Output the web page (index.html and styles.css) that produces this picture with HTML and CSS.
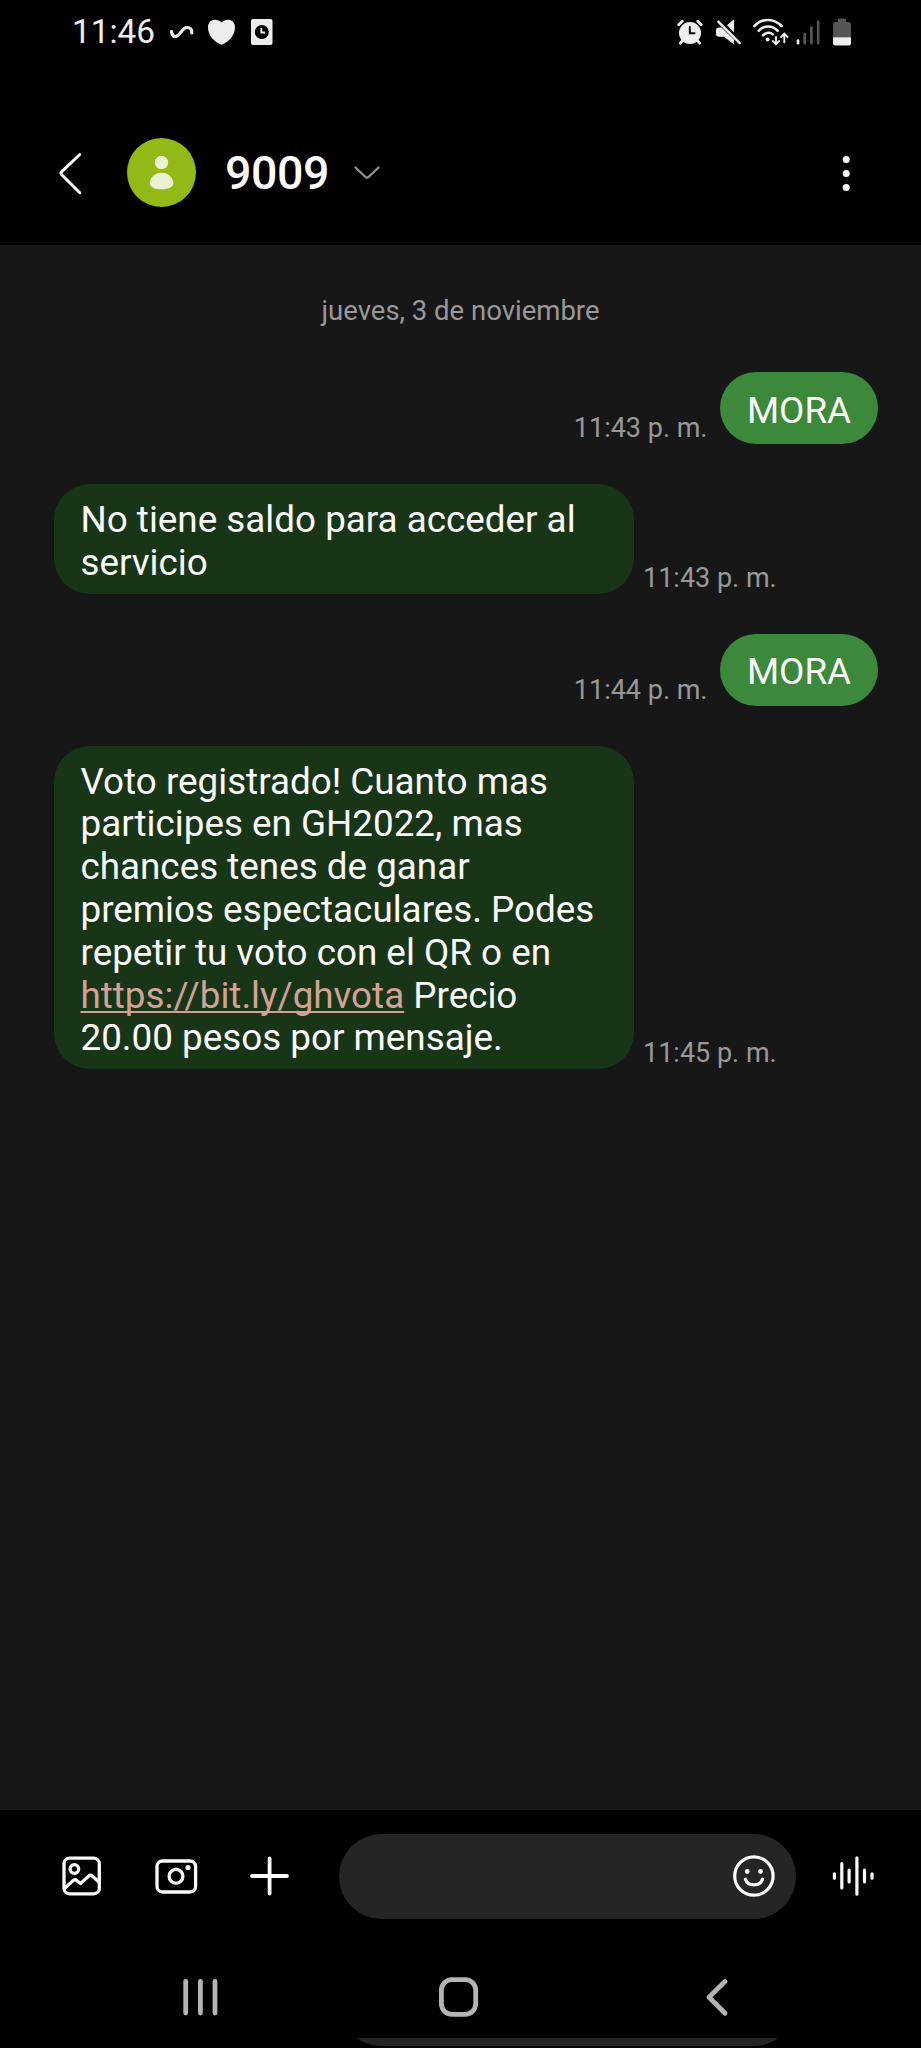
FILE: index.html
```html
<!DOCTYPE html>
<html lang="es">
<head>
<meta charset="utf-8">
<title>9009</title>
<link rel="stylesheet" href="styles.css">
</head>
<body>
<div class="phone">
  <div class="status">
    <span class="clock">11:46</span>
    <svg class="status-left" viewBox="165 0 120 70">
      <path d="M171.500 31.500C172 35.500 174 37.300 176.500 36.300C181 34.500 182 27.700 187 27.500C190 27.400 192.300 29.500 191.800 33" fill="none" stroke="#ededed" stroke-width="3.200" stroke-linecap="round"/>
      <path d="M221.500 22.500C217 18 208 19 208 27.500C208 35 214 42 221.500 44.700C229 42 235 35 235 27.500C235 19 226 18 221.500 22.500Z" fill="#ededed"/>
      <rect x="251" y="19" width="21.500" height="26" rx="2" fill="#ededed"/>
      <circle cx="261.800" cy="32" r="7" fill="#000"/>
      <path d="M261.300 28V32.500H265" fill="none" stroke="#ededed" stroke-width="1.800"/>
    </svg>
    <svg class="status-right" viewBox="670 0 190 70">
      <g fill="none" stroke="#ededed" stroke-linecap="round">
        <circle cx="690" cy="33" r="11" fill="#ededed" stroke="none"/>
        <path d="M678.700 24.800L682.300 21.200M697.700 21.200L701.300 24.800M683 40L680.300 43.200M697 40L699.700 43.200" stroke-width="2.800"/>
        <path d="M689.800 27V33.200H694.500" stroke="#000" stroke-width="1.900"/>
        <path d="M727 25.300L734 19.300V32.200ZM716 30Q716 27.500 719 27.500H721.500L734 39.800V44.500L724 36.800H719Q716 36.800 716 34Z" fill="#ededed" stroke="none"/>
        <path d="M718.300 21.600L739.700 43.200" stroke-width="2.500"/>
        <path d="M754.300 26.200C762 17.800 774 17.800 781.700 26.200M758.700 30.800C764 25 772.500 25 777.700 30.800M763 35.300C765.800 32.300 770.500 32 772.800 34.300" stroke-width="2.500"/>
        <circle cx="767.700" cy="39.500" r="1.900" fill="#ededed" stroke="none"/>
        <path d="M776 37V44M772.800 41L776 44.300L779.200 41M784.300 42.300V34M781.100 37L784.300 33.700L787.500 37" stroke-width="1.900"/>
        <path d="M798 40.500V43.200" stroke-width="2.700"/>
        <path d="M804.700 34V43.200M811.400 27.500V43.200M818.200 21.500V43.200" stroke="#555" stroke-width="2.700"/>
      </g>
      <path d="M838 22V19.500Q838 18.500 839 18.500H845Q846 18.500 846 19.500V22H848.500Q851 22 851 24.500V37.300H833V24.500Q833 22 835.500 22Z" fill="#555"/>
      <path d="M833 37.300H851V43Q851 45.500 848.500 45.500H835.500Q833 45.500 833 43Z" fill="#ededed"/>
    </svg>
  </div>

  <header class="header">
    <svg class="back" viewBox="55 140 40 66"><path d="M79.800 154.500L61.500 171.800Q60.300 173.200 61.500 174.600L79.800 192.700" fill="none" stroke="#fafafa" stroke-width="3" stroke-linecap="round"/></svg>
    <div class="avatar">
      <svg viewBox="127 138 69 69"><g fill="#ebf2d4"><circle cx="161.500" cy="162.500" r="6.700"/><path d="M149.700 183.500C150 177 155 172.700 161.500 172.700S173 177 173.300 183.500C173.300 187 168 189.300 161.500 189.300S149.700 187 149.700 183.500Z"/></g></svg>
    </div>
    <h1 class="contact">9009</h1>
    <svg class="chevron" viewBox="350 160 34 26"><path d="M355.500 167.500L365.500 177Q367 178.500 368.500 177L378.500 167.500" fill="none" stroke="#929292" stroke-width="2.300" stroke-linecap="round"/></svg>
    <svg class="more" viewBox="836 150 20 46"><g fill="#fafafa"><circle cx="846.200" cy="159.500" r="3.500"/><circle cx="846.200" cy="173.500" r="3.500"/><circle cx="846.200" cy="187.500" r="3.500"/></g></svg>
  </header>

  <main class="thread">
    <div class="date">jueves, 3 de noviembre</div>
    <div class="row sent"><span class="time">11:43 p. m.</span><div class="bubble">MORA</div></div>
    <div class="row received"><div class="bubble">No tiene saldo para acceder al<br>servicio</div><span class="time">11:43 p. m.</span></div>
    <div class="row sent"><span class="time">11:44 p. m.</span><div class="bubble">MORA</div></div>
    <div class="row received"><div class="bubble">Voto registrado! Cuanto mas<br>participes en GH2022, mas<br>chances tenes de ganar<br>premios espectaculares. Podes<br>repetir tu voto con el QR o en<br><span class="link">https://bit.ly/ghvota</span> Precio<br>20.00 pesos por mensaje.</div><span class="time">11:45 p. m.</span></div>
  </main>

  <footer class="composer">
    <svg class="tools" viewBox="55 1850 230 52">
      <g fill="none" stroke="#fafafa" stroke-width="3.300" stroke-linecap="round" stroke-linejoin="round">
        <rect x="64" y="1858.200" width="35.300" height="35.600" rx="5.500"/>
        <circle cx="74.400" cy="1869" r="4.300"/>
        <path d="M65 1888L73.300 1880.400Q75 1879 76.700 1880.400L80.500 1883.600L88.800 1876Q90.500 1874.500 92.200 1876L98.700 1881.800"/>
        <rect x="157" y="1861" width="38.600" height="31" rx="5.500"/>
        <circle cx="176" cy="1876.300" r="6.900"/>
        <circle cx="188" cy="1867.500" r="2.600" fill="#fafafa" stroke="none"/>
        <path d="M252 1876H287M269.600 1858.500V1893.500" stroke-width="3.800"/>
      </g>
    </svg>
    <div class="field">
      <svg class="smile" viewBox="730 1852 48 48"><g fill="none" stroke="#fafafa" stroke-width="3.200" stroke-linecap="round"><circle cx="753.900" cy="1876" r="19.200"/><path d="M745.400 1879.200C748 1886.800 760 1886.800 762.500 1879.200"/></g><g fill="#fafafa"><circle cx="747.200" cy="1871.500" r="2.400"/><circle cx="760.500" cy="1871.500" r="2.400"/></g></svg>
    </div>
    <svg class="wave" viewBox="830 1852 46 48"><path d="M834.400 1873.800V1878.200M841.800 1863.500V1888M849.100 1870V1882M856.900 1857.800V1894.200M864.500 1870V1882M872 1873.800V1878.200" stroke="#fafafa" stroke-width="3.200" stroke-linecap="round"/></svg>
  </footer>

  <nav class="nav">
    <svg viewBox="175 1970 560 54"><g fill="none" stroke="#b4b4b4" stroke-width="4.800" stroke-linecap="round" stroke-linejoin="round"><path d="M185.700 1981.300V2013M200.400 1981.300V2013M215 1981.300V2013"/><rect x="441.400" y="1979.700" width="34.300" height="34.600" rx="10.500"/><path d="M725 1981.500L709 1997.200L725 2013.300"/></g></svg>
  </nav>
  <div class="edge"><div class="edge-pill"></div></div>
</div>
</body>
</html>
```

FILE: styles.css
```css
* { box-sizing: border-box; }
body { margin: 0; background: #000; font-family: Roboto, sans-serif; }
svg { display: block; flex: none; }
.phone { width: 921px; height: 2048px; display: flex; flex-direction: column; overflow: hidden; background: #000; }

.status { height: 70px; flex: none; display: flex; padding-left: 72px; }
.clock { width: 93px; padding-top: 12px; font-size: 33.3px; line-height: 40px; color: #ededed; }
.status-left { width: 120px; height: 70px; }
.status-right { width: 190px; height: 70px; margin-left: 385px; }

.header { height: 175px; flex: none; display: flex; align-items: center; padding: 30px 65px 0 55px; }
.back { width: 40px; height: 66px; }
.avatar { width: 69px; height: 69px; margin-left: 32px; border-radius: 50%; background: #93b916; }
.contact { margin: 0 0 0 29px; width: 125px; font-size: 46.5px; line-height: 56px; letter-spacing: -0.4px; font-weight: 500; color: #fafafa; }
.chevron { width: 34px; height: 26px; }
.more { width: 20px; height: 46px; margin-left: auto; }

.thread { height: 1565px; flex: none; padding: 45px 43px 0 54px; background: #171717; }
.date { height: 82px; padding-right: 11px; text-align: center; font-size: 27.5px; line-height: 41px; color: #999; }
.row { display: flex; align-items: flex-end; margin-bottom: 40px; }
.sent { justify-content: flex-end; gap: 12.5px; }
.received { gap: 9px; }
.bubble { font-size: 36.8px; line-height: 42.8px; color: #fafafa; white-space: nowrap; }
.sent .bubble { width: 158px; height: 72px; padding-top: 17.5px; border-radius: 36px; text-align: center; background: #3d893b; }
.received .bubble { width: 580px; padding: 15px 0 9px 26.5px; border-radius: 36px; background: #193518; }
.time { font-size: 27px; line-height: 32px; color: #999; white-space: nowrap; }
.link { color: #d2a297; text-decoration: underline; text-decoration-thickness: 2px; text-underline-offset: 3px; text-decoration-skip-ink: none; }

.composer { height: 132px; flex: none; display: flex; align-items: center; padding-left: 55px; }
.tools { width: 230px; height: 52px; overflow: visible; }
.field { width: 457px; height: 85px; margin-left: 54px; padding-right: 18px; display: flex; align-items: center; justify-content: flex-end; border-radius: 43px; background: #252525; }
.smile { width: 48px; height: 48px; }
.wave { width: 46px; height: 48px; margin-left: 34px; }

.nav { height: 96px; flex: none; display: flex; padding: 28px 0 0 175px; }
.nav svg { width: 560px; height: 54px; }
.edge { height: 10px; flex: none; display: flex; align-items: flex-end; padding: 0 0 2px 339px; overflow: hidden; }
.edge-pill { width: 457px; height: 85px; flex: none; border-radius: 43px; background: #252525; }
```
